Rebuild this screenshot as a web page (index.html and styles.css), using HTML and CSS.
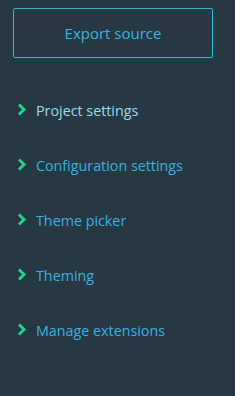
FILE: index.html
```html
<!DOCTYPE html>
<html lang="en">
  <head>
    <meta charset="UTF-8" />
    <meta name="viewport" content="width=device-width, initial-scale=1.0" />
    <title>Sidebar</title>
    <link rel="stylesheet" href="styles.css">
  </head>
  <body>
    <div class="sidebar">
      <button class="export-btn">Export source</button>
      <ul class="menu">
        <li class="menu-item active">
          <svg class="chevron" viewBox="0 0 10 13"><path d="M2 1.5 L7 6.5 L2 11.5" /></svg>
          <span>Project settings</span>
        </li>
        <li class="menu-item">
          <svg class="chevron" viewBox="0 0 10 13"><path d="M2 1.5 L7 6.5 L2 11.5" /></svg>
          <span>Configuration settings</span>
        </li>
        <li class="menu-item">
          <svg class="chevron" viewBox="0 0 10 13"><path d="M2 1.5 L7 6.5 L2 11.5" /></svg>
          <span>Theme picker</span>
        </li>
        <li class="menu-item">
          <svg class="chevron" viewBox="0 0 10 13"><path d="M2 1.5 L7 6.5 L2 11.5" /></svg>
          <span>Theming</span>
        </li>
        <li class="menu-item">
          <svg class="chevron" viewBox="0 0 10 13"><path d="M2 1.5 L7 6.5 L2 11.5" /></svg>
          <span>Manage extensions</span>
        </li>
      </ul>
    </div>
  </body>
</html>
```

FILE: styles.css
```css
html,
body {
  margin: 0;
  height: 100%;
  background-color: #263842;
}
.sidebar {
  padding: 8px 22px 0 13px;
  font-family: "Open Sans", "Noto Sans", sans-serif;
}
.export-btn {
  display: block;
  width: 200px;
  height: 50px;
  background: transparent;
  border: 1px solid #33b5dc;
  border-radius: 2px;
  color: #36b6e0;
  font-family: inherit;
  font-size: 15px;
  cursor: pointer;
}
.menu {
  list-style: none;
  margin: 25px 0 0 0;
  padding: 0;
}
.menu-item {
  display: flex;
  align-items: center;
  height: 55px;
  color: #3ab2e0;
  font-size: 14.3px;
}
.menu-item.active {
  color: #9fd8ef;
}
.chevron {
  width: 10px;
  height: 13px;
  margin: -2px 9px 0 4px;
  fill: none;
  stroke: #1dd38f;
  stroke-width: 3;
}
```
